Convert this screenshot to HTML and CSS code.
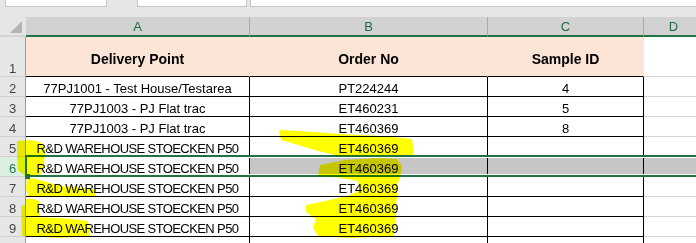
FILE: index.html
```html
<!DOCTYPE html>
<html lang="en">
<head>
    <meta charset="UTF-8">
    <meta name="viewport" content="width=device-width, initial-scale=1.0">
    <title>Delivery Points</title>
    <link rel="stylesheet" href="styles.css">
</head>
<body>
    <div class="wrap">
        <div class="bar">
            <div class="box box-name"></div>
            <div class="box box-mid"></div>
            <div class="box box-formula"></div>
        </div>

        <div class="sheet">
            <div class="corner">
                <svg width="26" height="18" viewBox="0 0 26 18"><polygon points="22,4 22,16 10,16" fill="#b4b4b4"/></svg>
            </div>
            <div class="colhead">A</div>
            <div class="colhead">B</div>
            <div class="colhead">C</div>
            <div class="colhead">D</div>

            <div class="rh">1</div>
            <div class="cell head">Delivery Point</div>
            <div class="cell head">Order No</div>
            <div class="cell head">Sample ID</div>
            <div class="cell blank"></div>

            <div class="rh">2</div>
            <div class="cell">77PJ1001 - Test House/Testarea</div>
            <div class="cell">PT224244</div>
            <div class="cell">4</div>
            <div class="cell blank"></div>

            <div class="rh">3</div>
            <div class="cell">77PJ1003 - PJ Flat trac</div>
            <div class="cell">ET460231</div>
            <div class="cell">5</div>
            <div class="cell blank"></div>

            <div class="rh">4</div>
            <div class="cell">77PJ1003 - PJ Flat trac</div>
            <div class="cell">ET460369</div>
            <div class="cell">8</div>
            <div class="cell blank"></div>

            <div class="rh">5</div>
            <div class="cell caps">R&amp;D WAREHOUSE STOECKEN P50</div>
            <div class="cell">ET460369</div>
            <div class="cell"></div>
            <div class="cell blank"></div>

            <div class="rh active">6</div>
            <div class="cell caps">R&amp;D WAREHOUSE STOECKEN P50</div>
            <div class="cell sel">ET460369</div>
            <div class="cell sel"></div>
            <div class="cell blank sel"></div>

            <div class="rh">7</div>
            <div class="cell caps">R&amp;D WAREHOUSE STOECKEN P50</div>
            <div class="cell">ET460369</div>
            <div class="cell"></div>
            <div class="cell blank"></div>

            <div class="rh">8</div>
            <div class="cell caps">R&amp;D WAREHOUSE STOECKEN P50</div>
            <div class="cell">ET460369</div>
            <div class="cell"></div>
            <div class="cell blank"></div>

            <div class="rh">9</div>
            <div class="cell caps">R&amp;D WAREHOUSE STOECKEN P50</div>
            <div class="cell">ET460369</div>
            <div class="cell"></div>
            <div class="cell blank"></div>

            <div class="rh"></div>
            <div class="cell"></div>
            <div class="cell"></div>
            <div class="cell"></div>
            <div class="cell blank"></div>
        </div>

        <!-- selected row 6 -->
        <div class="selection"><span class="handle"></span></div>

        <!-- highlighter strokes drawn over the sheet -->
        <svg class="marker" width="696" height="243" viewBox="0 0 696 243">
            <polygon points="279,130 300,131 340,134 380,136 412,139 414,155 340,156 318,151 298,145 281,140"/>
            <polygon points="17,141 30,140 40,142 45,150 44,165 40,175 25,176 18,170 17,155"/>
            <polygon points="27,178 36,179 50,183 62,186 95,189 96,197 28,197 26,188"/>
            <polygon points="25,199 33,199 39,201 40,216 25,216"/>
            <polygon points="21,205 26,206 28,217 60,218 88,221 90,236 60,238 22,236"/>
            <polygon points="320,165 345,160 380,158 397,159 402,166 400,177 397,186 397,196 396,206 396,216 395,226 394,236 350,238 318,236 313,228 316,219 306,212 306,205 330,200 348,196 360,190 358,181 335,177 318,176"/>
        </svg>
    </div>
</body>
</html>
```

FILE: styles.css
```css
body {
    margin: 0;
    font-family: "Liberation Sans", Arial, sans-serif;
    background: #fff;
    overflow: hidden;
}
.wrap {
    position: relative;
    width: 696px;
    height: 243px;
    overflow: hidden;
}
.bar {
    display: flex;
    height: 17px;
    background: #e6e6e6;
}
.box {
    box-sizing: border-box;
    height: 7px;
    background: #fff;
    border: 1px solid #c6c6c6;
    border-top: none;
}
.box-name {
    margin-left: 5px;
    width: 102px;
}
.box-mid {
    margin-left: 30px;
    width: 110px;
}
.box-formula {
    margin-left: 3px;
    flex: 1;
    border-right: none;
}
.sheet {
    display: grid;
    grid-template-columns: 26px 224px 238px 156px 60px;
    grid-template-rows: 20px 40px repeat(9, 20px);
}
.sheet > div {
    box-sizing: border-box;
}
.corner {
    background: #e6e6e6;
    border-bottom: 2px solid #d4d4d4;
}
.corner svg {
    display: block;
}
.colhead {
    background: #d2d2d2;
    border-right: 1px solid #ababab;
    border-bottom: 2px solid #217346;
    color: #1f6b43;
    font-size: 13px;
    display: flex;
    align-items: center;
    justify-content: center;
}
.rh {
    background: #e6e6e6;
    border-right: 1px solid #9e9e9e;
    border-bottom: 1px solid #cfcfcf;
    color: #444;
    font-size: 13px;
    line-height: 15px;
    display: flex;
    align-items: flex-end;
    justify-content: center;
}
.rh.active {
    background: #dcefe3;
    color: #217346;
}
.cell {
    border-right: 1px solid #000;
    border-bottom: 1px solid #000;
    color: #000;
    font-size: 13px;
    line-height: 15px;
    white-space: nowrap;
    display: flex;
    align-items: flex-end;
    justify-content: center;
}
.cell.caps {
    letter-spacing: -0.6px;
}
.cell.head {
    background: #fce4d6;
    border-right-color: #fce4d6;
    font-weight: bold;
    font-size: 14px;
    line-height: 16px;
    align-items: center;
    padding-top: 4px;
}
.cell.blank {
    border-right: 1px solid #d4d4d4;
    border-bottom: 1px solid #d4d4d4;
}
.cell.sel {
    background: #c6c6c6;
}
.selection {
    position: absolute;
    left: 25px;
    top: 155px;
    width: 690px;
    height: 22px;
    box-sizing: border-box;
    border: 2px solid #217346;
    box-shadow: inset 0 0 0 1px #fff;
}
.handle {
    position: absolute;
    left: -2px;
    bottom: -4px;
    width: 5px;
    height: 5px;
    background: #217346;
}
.marker {
    position: absolute;
    left: 0;
    top: 0;
    fill: #ffff00;
    mix-blend-mode: multiply;
    pointer-events: none;
}
```
